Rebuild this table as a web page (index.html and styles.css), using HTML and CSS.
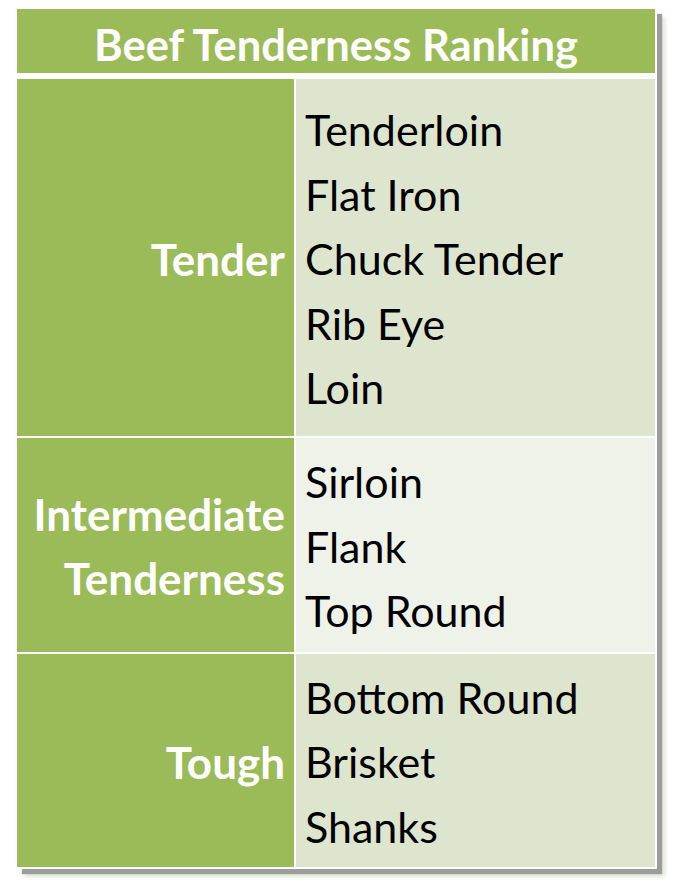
FILE: index.html
```html
<!DOCTYPE html>
<html>
<head>
<meta charset="utf-8">
<link rel="stylesheet" href="styles.css">
</head>
<body>
<div class="frame">
  <div class="table">
    <div class="title">Beef Tenderness Ranking</div>
    <div class="label r1">Tender</div>
    <div class="items r1 light">
      <div>Tenderloin</div>
      <div>Flat Iron</div>
      <div>Chuck Tender</div>
      <div>Rib Eye</div>
      <div>Loin</div>
    </div>
    <div class="label r2">Intermediate<br>Tenderness</div>
    <div class="items r2 pale">
      <div>Sirloin</div>
      <div>Flank</div>
      <div>Top Round</div>
    </div>
    <div class="label r3">Tough</div>
    <div class="items r3 light">
      <div>Bottom Round</div>
      <div>Brisket</div>
      <div>Shanks</div>
    </div>
  </div>
</div>
</body>
</html>
```
FILE: styles.css
```css
html, body {
  margin: 0;
  padding: 0;
  background: #ffffff;
}
.frame {
  padding: 9px 0 20px 17px;
}
.table {
  display: grid;
  grid-template-columns: 277px 359px;
  grid-template-rows: 68px 357px 214px 213px;
  gap: 2px;
  width: max-content;
  background: #ffffff;
  padding: 0 2px 2px 0;
  box-shadow: 5px 5px 1px #9c9c9c, 8px 8px 4px #dfe5d3;
  font-family: Lato, "Open Sans", sans-serif;
}
.title {
  grid-column: 1 / 3;
  background: #9bbb59;
  color: #ffffff;
  font-weight: 700;
  font-size: 43.5px;
  display: flex;
  align-items: center;
  justify-content: center;
  padding-top: 6px;
  margin-bottom: 4px;
}
.label {
  background: #9bbb59;
  color: #ffffff;
  font-weight: 700;
  font-size: 44px;
  line-height: 64px;
  display: flex;
  flex-direction: column;
  justify-content: center;
  text-align: right;
  padding-right: 9px;
  padding-top: 2px;
}
.items {
  display: flex;
  flex-direction: column;
  justify-content: center;
  font-size: 43px;
  line-height: 64.5px;
  color: #000000;
  padding-left: 9px;
  padding-top: 4px;
}
.light { background: #dee5cf; }
.pale { background: #eff2e9; }
```
